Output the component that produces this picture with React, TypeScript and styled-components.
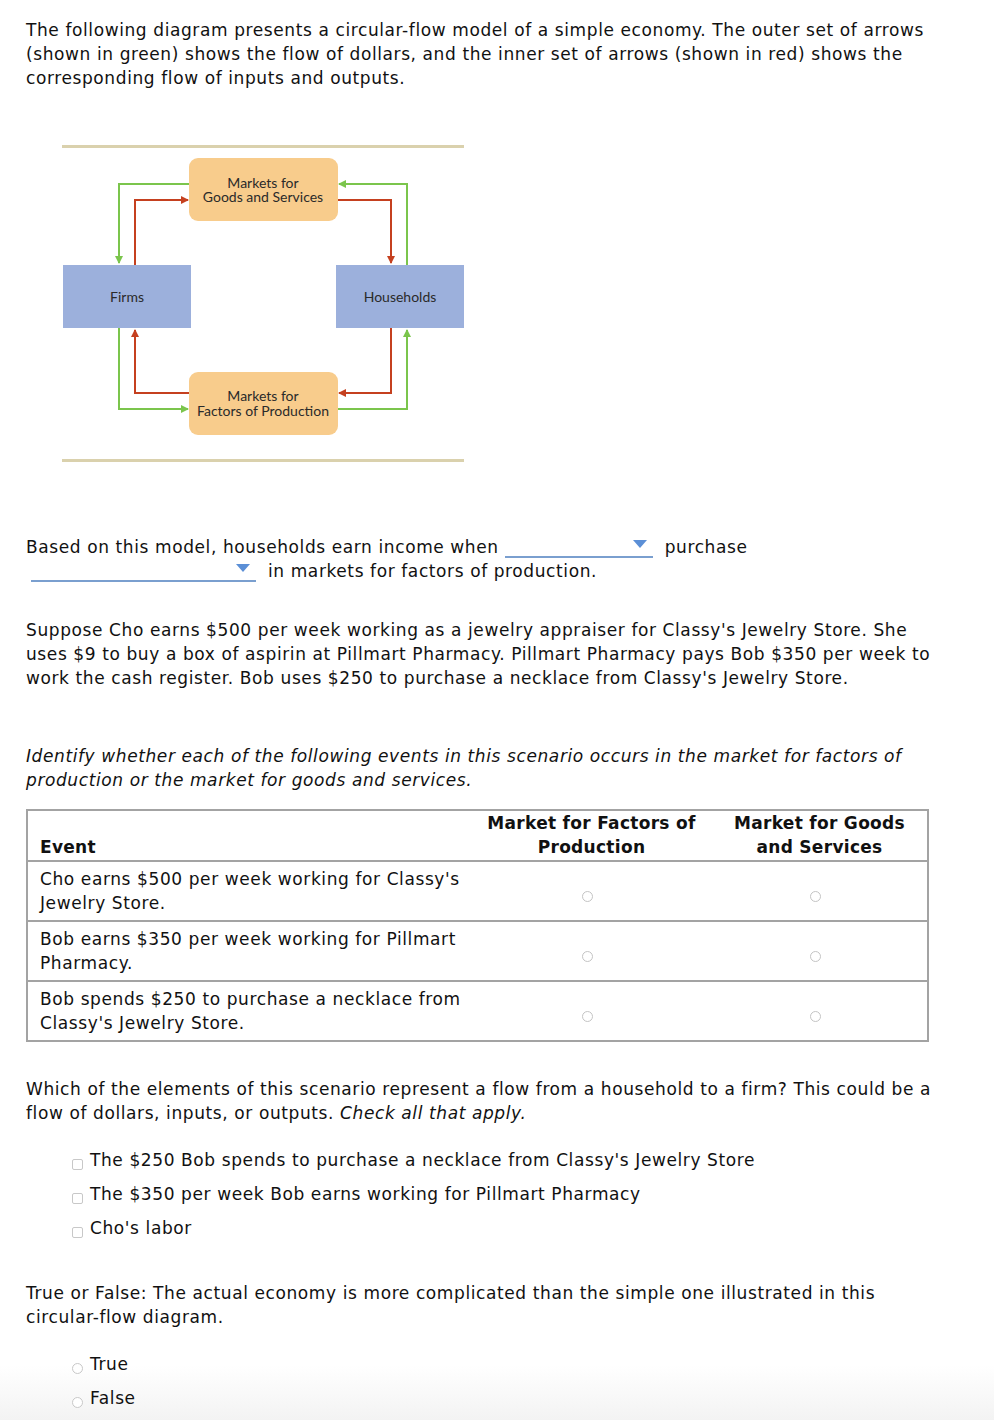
import React from 'react'
import styled, { createGlobalStyle } from 'styled-components'

const GlobalStyle = createGlobalStyle`
body {
  margin: 0;
  background: #fff;
}
`

const Page = styled.div`
min-height: 1420px;
box-sizing: border-box;
padding: 18px 60px 0 26px;
font-family: "DejaVu Sans", Verdana, sans-serif;
font-size: 17px;
letter-spacing: 0.6px;
line-height: 24px;
color: #111;
background: linear-gradient(to bottom, #fff 1365px, #f3f3f3 1420px);
`

const Para = styled.p<{ gap?: number; italic?: boolean }>`
margin: ${({ gap }) => gap || 0}px 0 0;
font-style: ${({ italic }) => (italic ? 'italic' : 'normal')};
`

const Figure = styled.div`
margin: 55px 0 0 36px;
width: 402px;
height: 318px;
letter-spacing: 0;
`

const Dropdown = styled.span<{ w: number; ml?: number }>`
display: inline-block;
position: relative;
width: ${({ w }) => w}px;
height: 14px;
margin-left: ${({ ml }) => ml || 0}px;
margin-right: 6px;
vertical-align: -5px;
border-bottom: 2px solid #7a9fcf;
&::after {
  content: '';
  position: absolute;
  right: 6px;
  top: -2px;
  border-left: 7px solid transparent;
  border-right: 7px solid transparent;
  border-top: 8px solid #5b8fd6;
}
`

const Table = styled.table`
margin-top: 17px;
width: 901px;
table-layout: fixed;
border-collapse: collapse;
border: 2px solid #a3a3a3;
`

const HeadCell = styled.th<{ align?: string; w: number }>`
box-sizing: border-box;
width: ${({ w }) => w}px;
font-weight: bold;
letter-spacing: 0.3px;
text-align: ${({ align }) => align || 'center'};
vertical-align: bottom;
padding: 0 4px 1px 12px;
height: 46px;
border-bottom: 2px solid #a3a3a3;
`

const Cell = styled.td<{ center?: boolean }>`
padding: 5px 2px 5px 12px;
height: 48px;
vertical-align: middle;
text-align: ${({ center }) => (center ? 'center' : 'left')};
border-bottom: 2px solid #a3a3a3;
`

const Radio = styled.span`
display: inline-block;
width: 9px;
height: 9px;
border: 1px solid #c4c4c4;
border-radius: 50%;
background: #fff;
vertical-align: middle;
position: relative;
top: 4px;
left: -5px;
`

const OptionList = styled.div<{ gap: number }>`
margin: ${({ gap }) => gap}px 0 0 46px;
display: flex;
flex-direction: column;
`

const Option = styled.label`
display: flex;
align-items: center;
height: 34px;
gap: 7px;
`

const Box = styled.span<{ round?: boolean }>`
width: 9px;
height: 9px;
border: 1px solid #c8c8c8;
border-radius: ${({ round }) => (round ? '50%' : '2px')};
background: #fff;
margin-top: 8px;
flex-shrink: 0;
`

const green = '#7bc54c'
const red = '#c5401f'

const Diagram = () => (
  <svg width="402" height="318" viewBox="0 0 402 318" fontFamily="Lato, 'DejaVu Sans', sans-serif" fontSize="14" fill="#2a2a2a">
    <defs>
      <marker id="ag" markerWidth="8" markerHeight="8" refX="7" refY="4" orient="auto" markerUnits="userSpaceOnUse">
        <path d="M0,0 L8,4 L0,8 Z" fill={green} />
      </marker>
      <marker id="ar" markerWidth="8" markerHeight="8" refX="7" refY="4" orient="auto" markerUnits="userSpaceOnUse">
        <path d="M0,0 L8,4 L0,8 Z" fill={red} />
      </marker>
    </defs>
    <rect x="0" y="0" width="402" height="3" fill="#dad1ad" />
    <rect x="0" y="314" width="402" height="3" fill="#dad1ad" />

    <g fill="none" strokeWidth="2">
      <polyline points="127,39 57,39 57,118" stroke={green} markerEnd="url(#ag)" />
      <polyline points="73,120 73,55 126,55" stroke={red} markerEnd="url(#ar)" />
      <polyline points="276,55 329,55 329,118" stroke={red} markerEnd="url(#ar)" />
      <polyline points="345,120 345,39 277,39" stroke={green} markerEnd="url(#ag)" />
      <polyline points="329,183 329,248 277,248" stroke={red} markerEnd="url(#ar)" />
      <polyline points="276,264 345,264 345,185" stroke={green} markerEnd="url(#ag)" />
      <polyline points="127,248 73,248 73,185" stroke={red} markerEnd="url(#ar)" />
      <polyline points="57,183 57,264 126,264" stroke={green} markerEnd="url(#ag)" />
    </g>

    <rect x="1" y="120" width="128" height="63" fill="#9cb0dc" />
    <rect x="274" y="120" width="128" height="63" fill="#9cb0dc" />
    <rect x="127" y="13" width="149" height="63" rx="9" fill="#f8cc8c" />
    <rect x="127" y="227" width="149" height="63" rx="9" fill="#f8cc8c" />

    <g textAnchor="middle">
      <text x="201" y="43">Markets for</text>
      <text x="201" y="57">Goods and Services</text>
      <text x="65" y="157">Firms</text>
      <text x="338" y="157">Households</text>
      <text x="201" y="256">Markets for</text>
      <text x="201" y="271">Factors of Production</text>
    </g>
  </svg>
)

const rows = [
  ["Cho earns $500 per week working for Classy's", "Jewelry Store."],
  ['Bob earns $350 per week working for Pillmart', 'Pharmacy.'],
  ['Bob spends $250 to purchase a necklace from', "Classy's Jewelry Store."],
]

const checks = [
  "The $250 Bob spends to purchase a necklace from Classy's Jewelry Store",
  'The $350 per week Bob earns working for Pillmart Pharmacy',
  "Cho's labor",
]

export default function App() {
  return (
    <Page>
      <GlobalStyle />
      <Para>
        The following diagram presents a circular-flow model of a simple economy. The outer set of arrows
        (shown in green) shows the flow of dollars, and the inner set of arrows (shown in red) shows the
        corresponding flow of inputs and outputs.
      </Para>

      <Figure>
        <Diagram />
      </Figure>

      <Para gap={72}>
        Based on this model, households earn income when <Dropdown w={148} ml={0} /> purchase
        <br />
        <Dropdown w={225} ml={5} /> in markets for factors of production.
      </Para>

      <Para gap={35}>
        Suppose Cho earns $500 per week working as a jewelry appraiser for Classy's Jewelry Store. She
        uses $9 to buy a box of aspirin at Pillmart Pharmacy. Pillmart Pharmacy pays Bob $350 per week
        to work the cash register. Bob uses $250 to purchase a necklace from Classy's Jewelry Store.
      </Para>

      <Para gap={54} italic>
        Identify whether each of the following events in this scenario occurs in the market for factors of
        production or the market for goods and services.
      </Para>

      <Table>
        <thead>
          <tr>
            <HeadCell align="left" w={444}>Event</HeadCell>
            <HeadCell w={233}>Market for Factors of<br />Production</HeadCell>
            <HeadCell w={224}>Market for Goods<br />and Services</HeadCell>
          </tr>
        </thead>
        <tbody>
          {rows.map(([a, b]) => (
            <tr key={a}>
              <Cell>{a}<br />{b}</Cell>
              <Cell center><Radio /></Cell>
              <Cell center><Radio /></Cell>
            </tr>
          ))}
        </tbody>
      </Table>

      <Para gap={35}>
        Which of the elements of this scenario represent a flow from a household to a firm? This could be a
        flow of dollars, inputs, or outputs. <i>Check all that apply.</i>
      </Para>

      <OptionList gap={18}>
        {checks.map(c => (
          <Option key={c}><Box />{c}</Option>
        ))}
      </OptionList>

      <Para gap={36}>
        True or False: The actual economy is more complicated than the simple one illustrated in this
        circular-flow diagram.
      </Para>

      <OptionList gap={18}>
        <Option><Box round />True</Option>
        <Option><Box round />False</Option>
      </OptionList>
    </Page>
  )
}
